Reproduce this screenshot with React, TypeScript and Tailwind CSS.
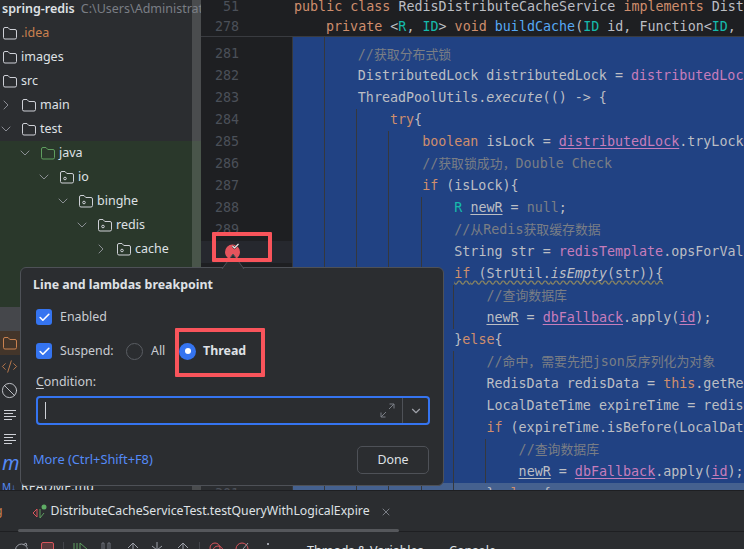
import React from 'react';
import { Check, ChevronDown, ChevronRight, X, Ban, CodeXml } from 'lucide-react';

const mono = "font-['DejaVu_Sans_Mono','Noto_Sans_CJK_SC',monospace]";
const ui = "font-['Noto_Sans',sans-serif]";

const K = ({ children }: { children: React.ReactNode }) => <span className="text-[#cf8e6d]">{children}</span>;
const F = ({ children }: { children: React.ReactNode }) => <span className="text-[#c77dbb]">{children}</span>;
const U = ({ children }: { children: React.ReactNode }) => <span className="text-[#c77dbb] underline underline-offset-2">{children}</span>;
const C = ({ children }: { children: React.ReactNode }) => <span className="text-[#7a7e85]">{children}</span>;
const T = ({ children }: { children: React.ReactNode }) => <span className="text-[#16baac]">{children}</span>;
const V = ({ children }: { children: React.ReactNode }) => <span className="underline underline-offset-2">{children}</span>;
const Z = ({ children }: { children: React.ReactNode }) => <span className="text-[12.9px]">{children}</span>;

const lines: { n: number; level: number; code: React.ReactNode }[] = [
  { n: 281, level: 2, code: <C>//<Z>获取分布式锁</Z></C> },
  { n: 282, level: 2, code: <>DistributedLock distributedLock = <F>distributedLock</F></> },
  { n: 283, level: 2, code: <>ThreadPoolUtils.<i>execute</i>(() -&gt; {'{'}</> },
  { n: 284, level: 3, code: <><K>try</K>{'{'}</> },
  { n: 285, level: 4, code: <><K>boolean</K> isLock = <U>distributedLock</U>.tryLock</> },
  { n: 286, level: 4, code: <C>//<Z>获取锁成功，</Z>Double Check</C> },
  { n: 287, level: 4, code: <><K>if</K> (isLock){'{'}</> },
  { n: 288, level: 5, code: <><T>R</T> <V>newR</V> = <span className="text-[#7a7e85]">null</span>;</> },
  { n: 289, level: 5, code: <C>//<Z>从</Z>Redis<Z>获取缓存数据</Z></C> },
  { n: 290, level: 5, code: <>String str = <F>redisTemplate</F>.opsForValue</> },
  { n: 291, level: 5, code: <span className="underline decoration-wavy decoration-[#8a8560] underline-offset-2"><K>if</K> (StrUtil.<i>isEmpty</i>(str)){'{'}</span> },
  { n: 292, level: 6, code: <C>//<Z>查询数据库</Z></C> },
  { n: 293, level: 6, code: <><V>newR</V> = <U>dbFallback</U>.apply(<U>id</U>);</> },
  { n: 294, level: 5, code: <>{'}'}<K>else</K>{'{'}</> },
  { n: 295, level: 6, code: <C>//<Z>命中，需要先把</Z>json<Z>反序列化为对象</Z></C> },
  { n: 296, level: 6, code: <>RedisData redisData = <K>this</K>.getRes</> },
  { n: 297, level: 6, code: <>LocalDateTime expireTime = redisD</> },
  { n: 298, level: 6, code: <><K>if</K> (expireTime.isBefore(LocalDate</> },
  { n: 299, level: 7, code: <C>//<Z>查询数据库</Z></C> },
  { n: 300, level: 7, code: <><V>newR</V> = <U>dbFallback</U>.apply(<U>id</U>);</> },
  { n: 301, level: 6, code: <>{'}'} <K>else</K> {'{'}</> },
];

const FolderIcon = ({ cls = 'text-[#ced0d6]', pkg = false }: { cls?: string; pkg?: boolean }) => (
  <svg width="16" height="16" viewBox="0 0 16 16" fill="none" stroke="currentColor" strokeWidth="1" className={`shrink-0 ${cls}`}>
    <path d="M1.5 4A1.5 1.5 0 0 1 3 2.500h3l1.800 2h5.200A1.500 1.500 0 0 1 14.500 6v6.500A1.500 1.500 0 0 1 13 14H3a1.500 1.500 0 0 1-1.500-1.500z" />
    {pkg && <circle cx="6" cy="9.500" r="1.300" />}
  </svg>
);

const LinesIcon = () => (
  <svg width="16" height="16" viewBox="0 0 16 16" fill="none" stroke="#ced0d6" strokeWidth="1" className="shrink-0">
    <path d="M3 3.500h12M3 6.500h9M3 9.500h12M3 12.500h8" />
  </svg>
);

const tree: { label: string; depth: number; arrow?: 'r' | 'd'; cls?: string; icon?: string; pkg?: boolean }[] = [
  { label: '.idea', depth: 0, cls: 'text-[#c9814f]' },
  { label: 'images', depth: 0 },
  { label: 'src', depth: 0 },
  { label: 'main', depth: 1, arrow: 'r' },
  { label: 'test', depth: 1, arrow: 'd' },
  { label: 'java', depth: 2, arrow: 'd', icon: 'text-[#5f9e5f]' },
  { label: 'io', depth: 3, arrow: 'd', pkg: true },
  { label: 'binghe', depth: 4, arrow: 'd', pkg: true },
  { label: 'redis', depth: 5, arrow: 'd', pkg: true },
  { label: 'cache', depth: 6, arrow: 'r', pkg: true },
];

const Bp = () => (
  <svg width="18" height="18" viewBox="0 0 18 18" className="shrink-0">
    <circle cx="9.500" cy="9" r="7.500" fill="#e5545d" />
    <path d="M9.500 3l2 2 4-4" fill="none" stroke="#2b2d30" strokeWidth="2.200" />
    <path d="M9.500 3l2 2 4-4" fill="none" stroke="#f0f0f0" strokeWidth="1.100" />
  </svg>
);

function Sidebar() {
  return (
    <div className={`relative flex w-[201px] shrink-0 flex-col overflow-hidden bg-[#2b2d30] text-[12.5px] text-[#dfe1e5] ${ui}`}>
      <div className="absolute bottom-0 right-0 top-0 w-[9px] bg-white/15" />
      <div className="relative flex h-[20px] items-center whitespace-nowrap pl-[2px]">
        <span className="font-semibold text-[#dfe1e5]">spring-redis</span>
        <span className="ml-[6px] text-[#7a7e85]">C:\Users\Administrat</span>
      </div>
      <div className="flex flex-col pt-[2px]">
        {tree.map((t, i) => (
          <div key={t.label} className={`flex h-[24px] items-center whitespace-nowrap ${i >= 5 ? 'bg-[#2a3a2b]/90' : ''}`} style={{ paddingLeft: 2 + t.depth * 19 }}>
            {t.depth > 0 && (
              <span className="-ml-[23px] w-[23px] shrink-0 text-[#9da0a8]">
                {t.arrow === 'r' ? <ChevronRight size={16} strokeWidth={1.25} /> : <ChevronDown size={16} strokeWidth={1.25} />}
              </span>
            )}
            <FolderIcon cls={t.icon} pkg={t.pkg} />
            <span className={`ml-[3px] pt-[2px] ${t.cls ?? ''}`}>{t.label}</span>
          </div>
        ))}
      </div>
      <div className="h-[46px] shrink-0 bg-[#2a3a2b]/90" />
      <div className="h-[24px] shrink-0 bg-[#45474b]" />
      <div className="flex h-[24px] shrink-0 items-center bg-[#43352a] pl-[2px]"><FolderIcon cls="text-[#c9814f]" /></div>
      <div className="flex h-[24px] shrink-0 items-center pl-[1px]"><CodeXml size={17} strokeWidth={1.25} className="text-[#c9814f]" /></div>
      <div className="flex h-[24px] shrink-0 items-center pl-[1px]"><Ban size={17} strokeWidth={1.25} className="text-[#ced0d6]" /></div>
      <div className="flex h-[24px] shrink-0 items-center pl-[1px]"><LinesIcon /></div>
      <div className="flex h-[24px] shrink-0 items-center pl-[1px]"><LinesIcon /></div>
      <div className="flex h-[24px] shrink-0 items-center pl-[2px] text-[20px] italic text-[#548af7]">m</div>
      <div className="flex h-[24px] shrink-0 items-center pl-[2px] pt-[2px]"><span className="w-[19px] text-[10px] text-[#548af7]">M↓</span>README.md</div>
    </div>
  );
}

function Editor() {
  return (
    <div className={`flex min-w-0 flex-1 flex-col overflow-hidden bg-[#1e1f22] text-[13.35px] leading-[22px] text-[#bcbec4] ${mono}`}>
      <div className="h-[37px] shrink-0 border-b border-[#393b40] whitespace-nowrap">
        <div className="-mt-[2px] flex h-[18px] items-center">
          <span className="w-[38px] shrink-0 text-right text-[#4b5059]">51</span>
          <span className="ml-[55px]"><K>public class</K> RedisDistributeCacheService <K>implements</K> Dist</span>
        </div>
        <div className="flex h-[18px] items-center pt-[4px]">
          <span className="w-[38px] shrink-0 text-right text-[#4b5059]">278</span>
          <span className="ml-[87px]"><K>private</K> &lt;<T>R</T>, <T>ID</T>&gt; <K>void</K> <span className="text-[#56a8f5]">buildCache</span>(<T>ID</T> id, Function&lt;<T>ID</T>, R</span>
        </div>
      </div>
      <div className="flex flex-1 flex-col overflow-hidden">
        <div className="flex h-[6.5px] shrink-0">
          <div className="w-[91px] shrink-0" />
          <div className="flex flex-1 bg-[#214283]">
            <span className="w-[32.16px] shrink-0 border-l border-[#35383d]" />
            <span className="w-[32.16px] shrink-0 border-l border-[#35383d]" />
          </div>
        </div>
        {lines.map((l) => (
          <div key={l.n} className={`flex h-[21.96px] shrink-0 whitespace-nowrap ${l.n === 290 ? 'bg-[#26282e]' : ''} ${l.n === 301 ? 'bg-[#2b2d30]' : ''}`}>
            <div className="flex w-[91px] shrink-0 items-center justify-start">
              {l.n === 290 ? (
                <span className="ml-[22px] flex"><Bp /></span>
              ) : (
                <span className="w-[38px] text-right text-[#4b5059]">{l.n}</span>
              )}
            </div>
            <div className={`flex flex-1 ${l.n === 301 ? 'bg-[#45618f]' : 'bg-[#214283]'}`}>
              {Array.from({ length: l.level }, (_, i) => (
                <span key={i} className="w-[32.16px] shrink-0 border-l border-[#35383d]" />
              ))}
              <span className="pl-[1.5px]">{l.code}</span>
            </div>
          </div>
        ))}
      </div>
    </div>
  );
}

function BreakpointPopup() {
  return (
    <div className={`absolute left-[20px] top-[267px] h-[219px] w-[424px] rounded-[6px] border border-[#4e5157] bg-[#2b2d30] pl-[15px] pr-[14px] text-[12.4px] text-[#dfe1e5] ${ui}`}>
      <svg width="24" height="16" viewBox="0 0 24 16" className="absolute -top-[15px] left-[200px]">
        <path d="M1 16L12 1l11 15z" fill="#2b2d30" />
        <path d="M1 16L12 1l11 15" fill="none" stroke="#4e5157" />
      </svg>
      <div className="relative -ml-[3px] pt-[7px] font-bold leading-[20px]">Line and lambdas breakpoint</div>
      <div className="mt-[10px] flex h-[24px] items-center gap-[8px] text-[#c9ccd2]">
        <span className="flex h-[16px] w-[16px] items-center justify-center rounded-[3px] bg-[#3574f0]"><Check size={13} strokeWidth={3} className="text-white" /></span>
        <span>Enabled</span>
      </div>
      <div className="mt-[10px] flex h-[24px] items-center text-[#c9ccd2]">
        <span className="flex h-[16px] w-[16px] items-center justify-center rounded-[3px] bg-[#3574f0]"><Check size={13} strokeWidth={3} className="text-white" /></span>
        <span className="ml-[8px] w-[66px]">Suspend:</span>
        <span className="h-[17px] w-[17px] rounded-full border border-[#5a5d63]" />
        <span className="ml-[8px] w-[28px]">All</span>
        <span className="flex h-[17px] w-[17px] items-center justify-center rounded-full bg-[#3574f0]"><span className="h-[6px] w-[6px] rounded-full bg-white" /></span>
        <span className="ml-[7px] font-bold text-[#dfe1e5]">Thread</span>
      </div>
      <div className="mt-[9px] h-[20px] leading-[20px] text-[#c9ccd2]"><span className="underline underline-offset-2">C</span>ondition:</div>
      <div className="mt-[4px] flex h-[29px] w-[394px] items-stretch rounded-[4px] border-2 border-[#3574f0]">
        <div className="flex flex-1 items-center pl-[7px]"><span className="h-[17px] w-px bg-[#ced0d6]" /></div>
        <div className="flex w-[30px] items-center justify-center text-[#7a7e85]">
          <svg width="15" height="15" viewBox="0 0 15 15" fill="none" stroke="currentColor"><path d="M1 14l5-5M1 9.500V14h4.500M14 1L9 6M9.500 1H14v4.500" /></svg>
        </div>
        <div className="flex w-[26px] items-center justify-center border-l border-[#4e5157] text-[#9da0a8]"><ChevronDown size={14} /></div>
      </div>
      <div className="mt-[21px] flex items-center justify-between">
        <span className="-ml-[3px] text-[12.8px] text-[#548af7]">More (Ctrl+Shift+F8)</span>
        <span className="flex h-[28px] w-[72px] items-center justify-center rounded-[5px] border border-[#4e5157] text-[12.4px] text-[#dfe1e5]">Done</span>
      </div>
      <div className="absolute left-[154px] top-[60px] h-[49px] w-[90px] rounded-[1px] border-[4px] border-[#f9545b]" />
    </div>
  );
}

function BottomPanel() {
  return (
    <div className={`flex h-[59px] shrink-0 flex-col overflow-hidden border-t border-[#1e1f22] bg-[#2b2d30] text-[#dfe1e5] ${ui}`}>
      <div className="flex h-[40px] shrink-0 items-center pl-[31px] pt-[1px] text-[12.25px] whitespace-nowrap">
        <span className="-ml-[36px] mr-[29px] text-[#c9814f]">g</span>
        <svg width="16" height="18" viewBox="0 0 16 18" fill="none" className="shrink-0">
          <path d="M5 6L1 10l4 4V6z" stroke="#d9555b" />
          <path d="M8 6v9l4-5" stroke="#5f9e5f" />
          <circle cx="12" cy="4" r="2.500" fill="#5fad65" />
        </svg>
        <span className="ml-[3px]">DistributeCacheServiceTest.testQueryWithLogicalExpire</span>
        <X size={12} className="ml-[10px] text-[#7a7e85]" />
      </div>
      <div className="relative h-px shrink-0 bg-[#1e1f22]">
        <div className="absolute -top-[2px] left-[18px] h-[3px] w-[381px] rounded-full bg-[#55575b]" />
      </div>
      <div className="flex h-[18px] items-start pt-[10px] whitespace-nowrap text-[#9da0a8]">
        <svg width="15" height="15" viewBox="0 0 15 15" fill="none" stroke="#9da0a8" className="ml-[14px] shrink-0"><path d="M3 12A6 6 0 1 1 12 12M9 3l3-2 1 3" /></svg>
        <span className="ml-[12px] h-[13px] w-[13px] rounded-[2px] border border-[#d9555b] bg-[#5a3a3c]" />
        <span className="ml-[9px] h-[16px] w-px bg-[#43454a]" />
        <svg width="16" height="15" viewBox="0 0 16 15" fill="none" stroke="#5f9e5f" className="ml-[9px] shrink-0"><path d="M1 1v13M4 1v13M7 1l8 7-8 7z" /></svg>
        <svg width="10" height="15" viewBox="0 0 10 15" fill="none" stroke="#6f737a" className="ml-[12px] shrink-0"><path d="M1 1h2v13H1zM7 1h2v13H7z" /></svg>
        <svg width="12" height="15" viewBox="0 0 12 15" fill="none" stroke="#9da0a8" className="ml-[16px] shrink-0"><path d="M1 6l5-5 5 5M6 1v13" /></svg>
        <svg width="12" height="15" viewBox="0 0 12 15" fill="none" stroke="#9da0a8" className="ml-[12px] shrink-0"><path d="M6 0v7M1 4l5 4 5-4M1 12h10" /></svg>
        <svg width="12" height="15" viewBox="0 0 12 15" fill="none" stroke="#9da0a8" className="ml-[14px] shrink-0"><path d="M1 6l5-5 5 5M6 1v13" /></svg>
        <span className="ml-[10px] h-[16px] w-px bg-[#43454a]" />
        <svg width="15" height="15" viewBox="0 0 15 15" fill="none" stroke="#d9555b" className="ml-[9px] shrink-0"><circle cx="6" cy="6" r="5" /><circle cx="9" cy="9" r="5" /></svg>
        <svg width="15" height="15" viewBox="0 0 15 15" fill="none" stroke="#d9555b" className="ml-[11px] shrink-0"><circle cx="7" cy="7" r="6" /><path d="M3 13L13 1" stroke="#9da0a8" /></svg>
        <span className="ml-[17px] mt-[1px] flex shrink-0 flex-col gap-[4px]"><span className="h-[2px] w-[2px] bg-[#9da0a8]" /><span className="h-[2px] w-[2px] bg-[#9da0a8]" /></span>
        <span className="ml-[38px] w-[142px] shrink-0 text-[12.5px] leading-[18px] text-[#dfe1e5]">Threads &amp; Variables</span>
        <span className="text-[12.5px] leading-[18px] text-[#dfe1e5]">Console</span>
      </div>
    </div>
  );
}

export default function App() {
  return (
    <div className="relative flex h-[549px] w-[744px] flex-col overflow-hidden bg-[#1e1f22]">
      <div className="flex h-[490px] shrink-0">
        <Sidebar />
        <Editor />
      </div>
      <BottomPanel />
      <BreakpointPopup />
      <div className="absolute left-[212px] top-[232px] h-[30px] w-[60px] rounded-[1px] border-[4px] border-[#f9545b]" />
    </div>
  );
}
